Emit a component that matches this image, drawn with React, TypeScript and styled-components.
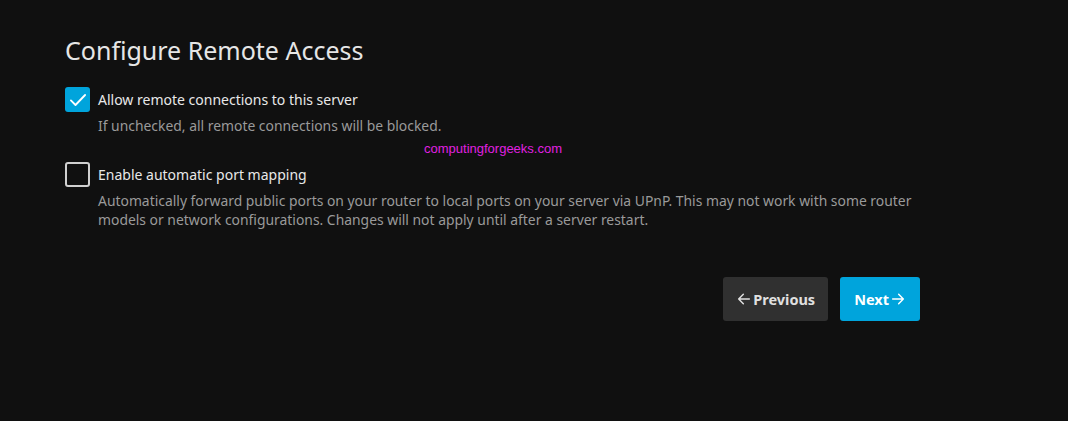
import { createGlobalStyle } from "styled-components"
import styled from "styled-components"

const Global = createGlobalStyle`
   html, body {
      margin: 0;
      background: #101010;
   }
   body {
      font-family: "Noto Sans", "Open Sans", sans-serif;
      color: rgba(255, 255, 255, 0.87);
   }
`

const Page = styled.div`
   position: relative;
   height: 421px;
   padding: 34px 0 0 65px;
   box-sizing: border-box;
`

const Form = styled.form`
   width: 855px;
`

const Title = styled.h1`
   margin: 0 0 21px;
   font-size: 25px;
   font-weight: 400;
   line-height: 32px;
   color: #e6e6e6;
`

const Field = styled.div`
   margin-bottom: 27px;
`

const CheckRow = styled.label`
   display: flex;
   align-items: center;
   gap: 8px;
   cursor: pointer;
`

const Box = styled.span<{ checked: boolean }>`
   display: flex;
   align-items: center;
   justify-content: center;
   width: 25px;
   height: 25px;
   box-sizing: border-box;
   border-radius: 3px;
   ${props => props.checked
      ? `background: #00a4dc; border: none;`
      : `background: transparent; border: 2px solid #d0d0d0;`}
`

const Label = styled.span`
   font-size: 14px;
   color: #e8e8e8;
`

const Help = styled.div`
   margin: 4px 0 0 33px;
   font-size: 13.9px;
   line-height: 19px;
   color: #9a9a9a;
`

const Buttons = styled.div`
   display: flex;
   justify-content: flex-end;
   gap: 12px;
   margin-top: 48px;
`

const Button = styled.button<{ primary?: boolean }>`
   display: flex;
   align-items: center;
   gap: 1px;
   height: 44px;
   padding: 0 ${props => props.primary ? '14px' : '13px'};
   border: none;
   border-radius: 3px;
   font-family: "Noto Sans", "Open Sans", sans-serif;
   font-size: 14.5px;
   font-weight: 700;
   background: ${props => props.primary ? '#00a4dc' : '#303030'};
   color: ${props => props.primary ? '#fff' : '#e0e0e0'};
`

const Watermark = styled.span`
   position: absolute;
   left: 424px;
   top: 141px;
   font-family: "Liberation Sans", Arial, sans-serif;
   font-size: 13px;
   color: #e020e0;
`

const Check = () => (
   <svg width="20" height="20" viewBox="0 0 24 24" fill="none" stroke="#fff" strokeWidth="2.2" strokeLinecap="round" strokeLinejoin="round">
      <path d="M3.5 12.5l5.5 5.5L20.5 6" />
   </svg>
)

const Arrow = ({ left }: { left?: boolean }) => (
   <svg width="16" height="16" viewBox="0 0 24 24" fill="none" stroke="currentColor" strokeWidth="2.2" strokeLinecap="round" strokeLinejoin="round">
      {left
         ? <path d="M20 12H4M11 5l-7 7 7 7" />
         : <path d="M4 12h16M13 5l7 7-7 7" />}
   </svg>
)

export default function App() {
   return (
      <Page>
         <Global />
         <Form onSubmit={e => e.preventDefault()}>
            <Title>Configure Remote Access</Title>
            <Field>
               <CheckRow>
                  <Box checked={true}><Check /></Box>
                  <Label>Allow remote connections to this server</Label>
               </CheckRow>
               <Help>If unchecked, all remote connections will be blocked.</Help>
            </Field>
            <Field>
               <CheckRow>
                  <Box checked={false} />
                  <Label>Enable automatic port mapping</Label>
               </CheckRow>
               <Help>
                  Automatically forward public ports on your router to local ports on your server via UPnP. This may not work with some router models or network configurations. Changes will not apply until after a server restart.
               </Help>
            </Field>
            <Buttons>
               <Button type="button"><Arrow left />Previous</Button>
               <Button type="submit" primary>Next<Arrow /></Button>
            </Buttons>
         </Form>
         <Watermark>computingforgeeks.com</Watermark>
      </Page>
   )
}
